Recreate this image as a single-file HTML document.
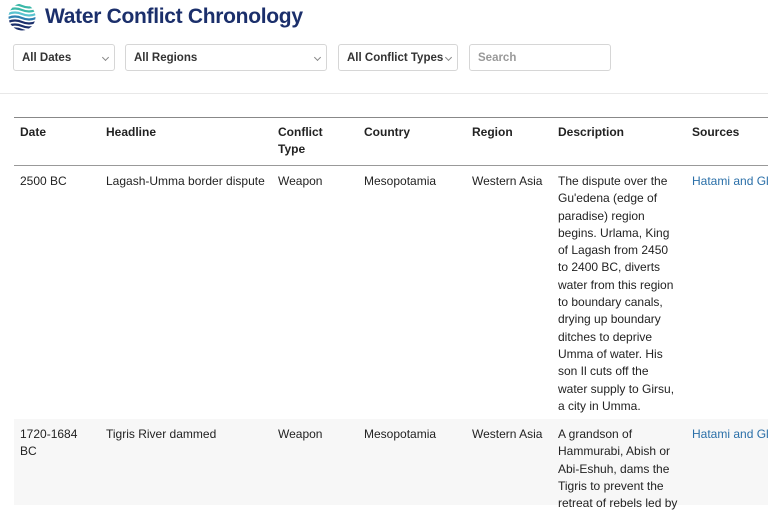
<!DOCTYPE html>
<html><head><style>
*{margin:0;padding:0;box-sizing:border-box}
body{width:768px;height:505px;overflow:hidden;background:#fff;font-family:"Liberation Sans",Arial,sans-serif;color:#222;position:relative}
.a{position:absolute}
h1{position:absolute;left:45px;top:5px;font-size:21px;font-weight:bold;color:#1b2f6b;letter-spacing:-0.3px}
.sel{position:absolute;top:44px;height:27px;border:1px solid #d6d6d6;border-radius:3px;font-size:11.5px;font-weight:bold;color:#333;padding:7px 0 0 8px;background:#fff}
.sel:after{content:"";position:absolute;right:6px;top:10px;width:4px;height:4px;border-right:1px solid #888;border-bottom:1px solid #888;transform:rotate(45deg)}
.t{position:absolute;font-size:12px;line-height:17.3px;color:#222}
.h{font-weight:bold}
.l{color:#2a6fa8}
</style></head><body>
<svg class="a" style="left:8px;top:3px" width="28" height="28" viewBox="0 0 28 28">
<defs><clipPath id="c"><circle cx="14" cy="14" r="13.5"/></clipPath></defs>
<g clip-path="url(#c)" fill="none" stroke-width="2.2">
<path d="M0 3Q7 0 14 3T28 3" stroke="#3bb8a8"/>
<path d="M0 7Q7 4 14 7T28 7" stroke="#3bb8a8"/>
<path d="M0 11Q7 8 14 11T28 11" stroke="#5ac3d0"/>
<path d="M0 15Q7 12 14 15T28 15" stroke="#2d7fb0"/>
<path d="M0 19Q7 16 14 19T28 19" stroke="#1b2f6b"/>
<path d="M0 23Q7 20 14 23T28 23" stroke="#1b2f6b"/>
<path d="M0 27Q7 24 14 27T28 27" stroke="#1b2f6b"/>
</g></svg>
<h1>Water Conflict Chronology</h1>
<div class="sel" style="left:13px;width:102px">All Dates</div>
<div class="sel" style="left:125px;width:202px">All Regions</div>
<div class="sel" style="left:338px;width:120px">All Conflict Types</div>
<div class="sel" style="left:469px;width:142px;color:#999;font-weight:bold">Search</div>
<style>.sel:nth-of-type(4):after{display:none}</style>
<div class="a" style="left:0;top:93px;width:768px;height:1px;background:#e8e8e8"></div>
<div class="a" style="left:14px;top:117px;width:754px;height:1px;background:#888"></div>
<div class="a" style="left:14px;top:165px;width:754px;height:1px;background:#999"></div>
<div class="a" style="left:14px;top:419px;width:754px;height:86px;background:#f7f7f7"></div>
<div class="t h" style="left:20px;top:124px">Date</div>
<div class="t h" style="left:106px;top:124px">Headline</div>
<div class="t h" style="left:278px;top:124px">Conflict<br>Type</div>
<div class="t h" style="left:364px;top:124px">Country</div>
<div class="t h" style="left:472px;top:124px">Region</div>
<div class="t h" style="left:558px;top:124px">Description</div>
<div class="t h" style="left:692px;top:124px">Sources</div>
<div class="t" style="left:20px;top:173px">2500 BC</div>
<div class="t" style="left:106px;top:173px">Lagash-Umma border dispute</div>
<div class="t" style="left:278px;top:173px">Weapon</div>
<div class="t" style="left:364px;top:173px">Mesopotamia</div>
<div class="t" style="left:472px;top:173px">Western Asia</div>
<div class="t" style="left:558px;top:173px;width:125px">The dispute over the<br>Gu'edena (edge of<br>paradise) region<br>begins. Urlama, King<br>of Lagash from 2450<br>to 2400 BC, diverts<br>water from this region<br>to boundary canals,<br>drying up boundary<br>ditches to deprive<br>Umma of water. His<br>son Il cuts off the<br>water supply to Girsu,<br>a city in Umma.</div>
<div class="t l" style="left:692px;top:173px;white-space:nowrap">Hatami and Gleick</div>
<div class="t" style="left:20px;top:426px">1720-1684<br>BC</div>
<div class="t" style="left:106px;top:426px">Tigris River dammed</div>
<div class="t" style="left:278px;top:426px">Weapon</div>
<div class="t" style="left:364px;top:426px">Mesopotamia</div>
<div class="t" style="left:472px;top:426px">Western Asia</div>
<div class="t" style="left:558px;top:426px;width:125px">A grandson of<br>Hammurabi, Abish or<br>Abi-Eshuh, dams the<br>Tigris to prevent the<br>retreat of rebels led by</div>
<div class="t l" style="left:692px;top:426px;white-space:nowrap">Hatami and Gleick</div>
</body></html>
